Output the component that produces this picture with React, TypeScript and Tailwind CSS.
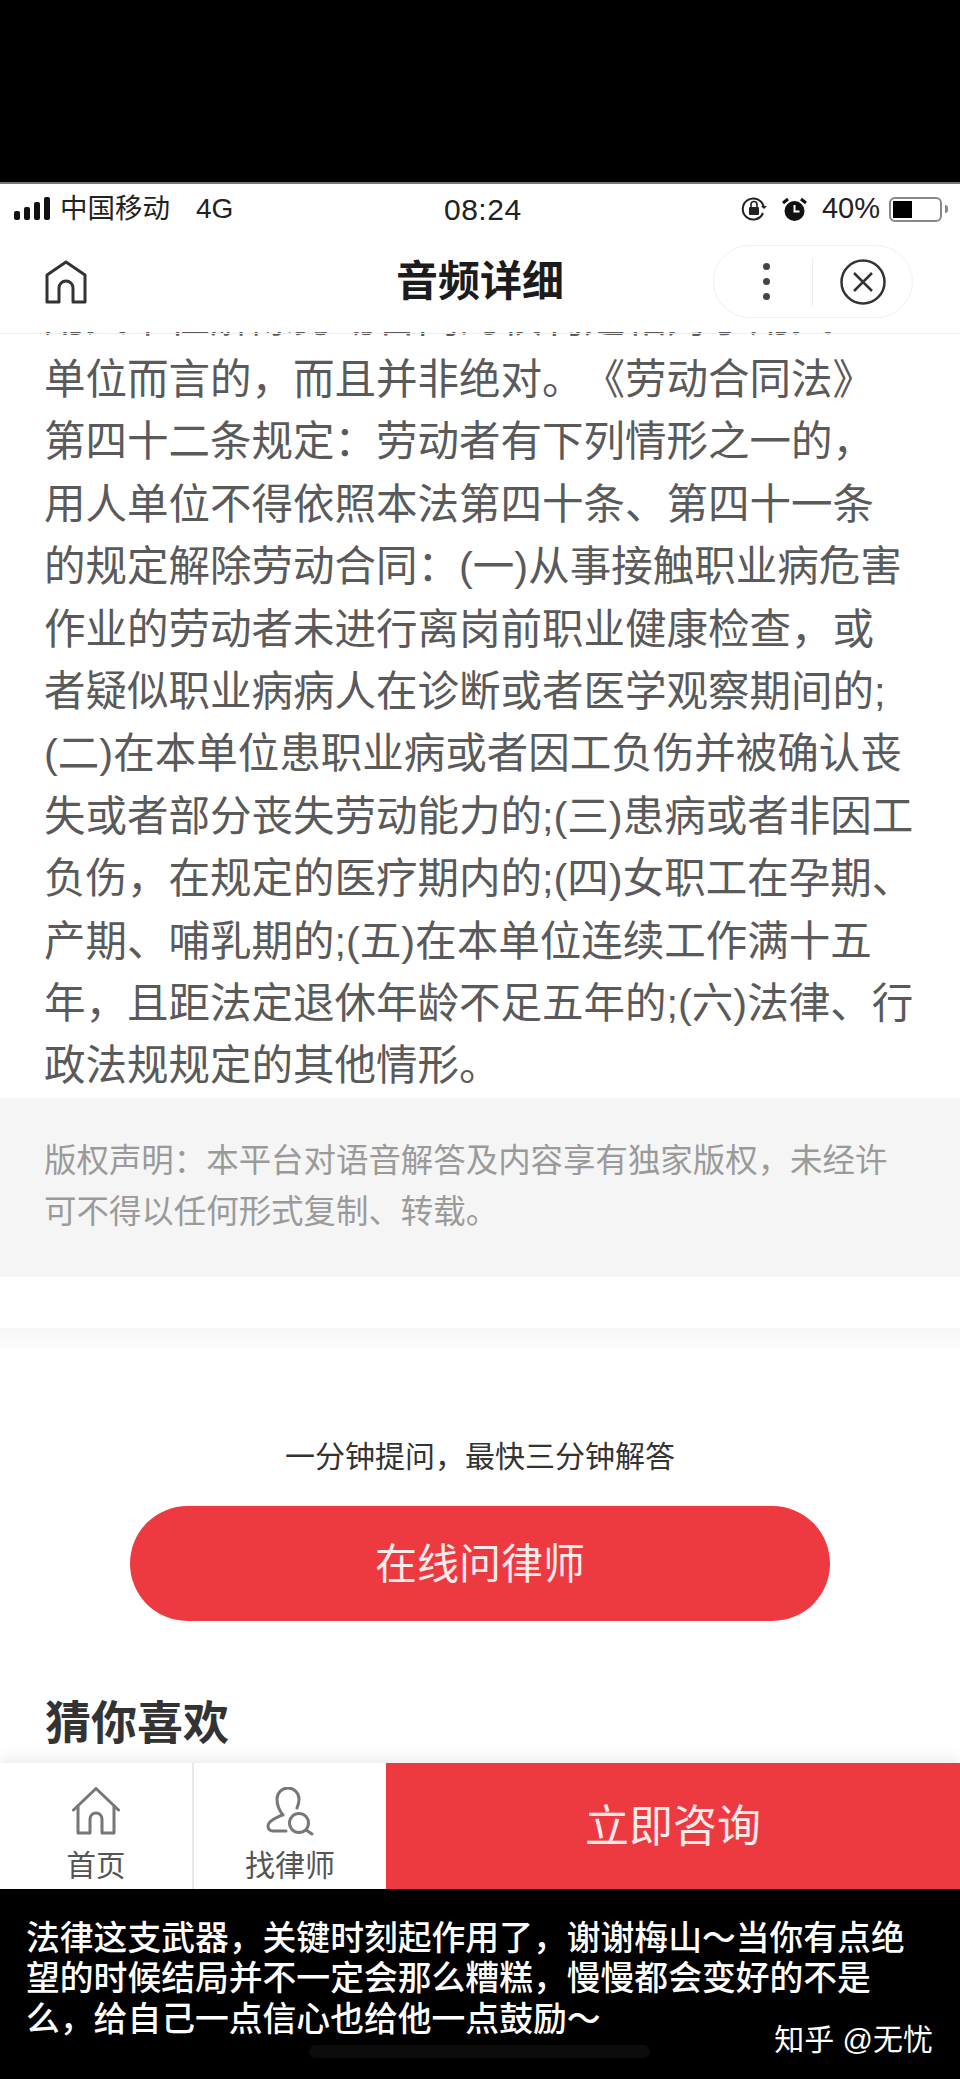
const cjk = "font-['Liberation_Sans','Noto_Sans_CJK_SC',sans-serif]";

const bodyLines = [
  '单位而言的，而且并非绝对。《劳动合同法》',
  '第四十二条规定：劳动者有下列情形之一的，',
  '用人单位不得依照本法第四十条、第四十一条',
  '的规定解除劳动合同：(一)从事接触职业病危害',
  '作业的劳动者未进行离岗前职业健康检查，或',
  '者疑似职业病病人在诊断或者医学观察期间的;',
  '(二)在本单位患职业病或者因工负伤并被确认丧',
  '失或者部分丧失劳动能力的;(三)患病或者非因工',
  '负伤，在规定的医疗期内的;(四)女职工在孕期、',
  '产期、哺乳期的;(五)在本单位连续工作满十五',
  '年，且距法定退休年龄不足五年的;(六)法律、行',
  '政法规规定的其他情形。',
];

function StatusBar() {
  return (
    <div className="relative flex h-[50px] items-center bg-white pl-[14px] pr-3 text-[#222]">
      <svg width="38" height="24" viewBox="0 0 38 24" fill="#111">
        <rect x="0" y="14" width="6" height="9" rx="2" />
        <rect x="10" y="10" width="6" height="13" rx="2" />
        <rect x="20" y="5" width="6" height="18" rx="2" />
        <rect x="30" y="0" width="6" height="23" rx="2" />
      </svg>
      <span className="ml-2 text-[27.5px]">中国移动</span>
      <span className="ml-[26px] text-[28px]">4G</span>
      <span className="absolute left-[444px] text-[30px] font-medium tracking-[0.5px]">08:24</span>
      <div className="ml-auto flex items-center">
        <svg width="26" height="26" viewBox="0 0 26 26" fill="none" stroke="#222" strokeWidth="2">
          <path d="M22 17a10.5 10.5 0 1 1 .6-6" />
          <path d="M20 10l3 3 3-3" fill="#222" stroke="none" />
          <rect x="8" y="11" width="10" height="8" rx="1" fill="#222" stroke="none" />
          <path d="M10 11V8.500a3 3 0 0 1 6 0V11" strokeWidth="1.600" />
        </svg>
        <svg className="ml-[15px]" width="25" height="25" viewBox="0 0 25 25">
          <circle cx="12.500" cy="14" r="10" fill="#111" />
          <path d="M12.500 8v6.500h5" stroke="#fff" strokeWidth="2" fill="none" />
          <path d="M1 6l5-4M24 6l-5-4" stroke="#111" strokeWidth="3" />
        </svg>
        <span className="ml-[15px] text-[29px]">40%</span>
        <div className="ml-[9px] flex h-[25px] w-[53px] items-center rounded-[6px] border-2 border-[#888] p-[2px]">
          <div className="h-full w-[19px] bg-black" />
        </div>
        <div className="ml-[3px] h-[8px] w-[3px] rounded-r-sm bg-[#888]" />
      </div>
    </div>
  );
}

function NavBar() {
  return (
    <div className="relative flex h-[98px] items-start bg-white pl-[45px]">
      <svg className="mt-[26px]" width="42" height="44" viewBox="0 0 42 44" fill="none" stroke="#333" strokeWidth="3" strokeLinejoin="round">
        <path d="M21 2L2 15v27h12V28a7 7 0 0 1 14 0v14h12V15z" />
      </svg>
      <h1 className="absolute left-[396px] top-[23px] text-[42px] font-bold leading-[50px] text-[#1c1c1c]">音频详细</h1>
      <div className="ml-auto mr-[47px] mt-[11px] flex h-[73px] w-[200px] items-center rounded-full border border-[#f1f1f1]">
        <div className="flex w-[98px] flex-col items-center gap-[8px] pl-[7px]">
          <span className="h-[7px] w-[7px] rounded-full bg-[#444]" />
          <span className="h-[7px] w-[7px] rounded-full bg-[#444]" />
          <span className="h-[7px] w-[7px] rounded-full bg-[#444]" />
        </div>
        <div className="h-[48px] w-px bg-[#eee]" />
        <svg className="ml-[27px]" width="46" height="46" viewBox="0 0 46 46" fill="none" stroke="#333" strokeWidth="2.500">
          <circle cx="23" cy="23" r="21.500" />
          <path d="M14 14l18 18M32 14L14 32" />
        </svg>
      </div>
    </div>
  );
}

function TabBar() {
  return (
    <div className="relative flex h-[126px] bg-white shadow-[0_-6px_14px_rgba(0,0,0,0.07)]">
      <div className="flex w-[194px] flex-col items-center border-r-2 border-[#e8e8e8] pt-[24px]">
        <svg width="48" height="48" viewBox="0 0 48 48" fill="none" stroke="#777" strokeWidth="3" strokeLinejoin="round" strokeLinecap="round">
          <path d="M1.500 23L24 1.500 46.500 23" />
          <path d="M6 19.500V46h12V32a6 6 0 0 1 12 0v14h12V19.500" />
        </svg>
        <span className="mt-[13px] text-[29.5px] leading-[36px] text-[#555]">首页</span>
      </div>
      <div className="flex w-[192px] flex-col items-center pt-[24px]">
        <svg width="48" height="50" viewBox="0 0 48 50" fill="none" stroke="#777" strokeWidth="3" strokeLinecap="round">
          <path d="M17 28C12 22 11 17 11 12a11 11 0 0 1 22 0c0 3-.5 6-2 9" />
          <path d="M16 28c-3 2-14 5-14 11 0 3 2 5 5 5h13" />
          <circle cx="33" cy="36" r="9.500" />
          <path d="M40 43l6 4" />
        </svg>
        <span className="mt-[11px] text-[30px] leading-[36px] text-[#555]">找律师</span>
      </div>
      <div className="flex flex-1 items-center justify-center bg-[#ec3a40] pt-[3px] text-[44px] text-[#fdeaea]">立即咨询</div>
    </div>
  );
}

export default function App() {
  return (
    <div className={`${cjk} flex h-[2079px] w-[960px] flex-col bg-black [text-spacing-trim:space-all]`}>
      <div className="h-[184px] border-b-2 border-[#777] bg-black" />
      <StatusBar />
      <NavBar />

      {/* line scrolled under the nav bar, only its lower edge shows */}
      <div className="relative h-[17px] overflow-hidden bg-white whitespace-nowrap pl-[44px] text-[41.5px] leading-[62.4px] text-[#5a5a5a]">
        <div className="-mt-[45px]">用人单位解除劳动合同的权利是相对于用人</div>
        <div className="absolute left-0 top-[1px] h-px w-full bg-[#eee]" />
      </div>

      <div className="whitespace-nowrap bg-white pl-[44px] text-[41.5px] leading-[62.4px] text-[#5a5a5a]">
        {bodyLines.map(line => (
          <div key={line}>{line}</div>
        ))}
      </div>

      <div className="h-[179px] bg-[#f5f5f5] pl-[44px] pt-[38px] text-[32.45px] leading-[51px] text-[#9a9a9a]">
        <div>版权声明：本平台对语音解答及内容享有独家版权，未经许</div>
        <div>可不得以任何形式复制、转载。</div>
      </div>
      <div className="h-[51px] bg-white" />
      <div className="h-[20px] bg-gradient-to-b from-[#f7f7f7] to-[#fcfcfc]" />

      <div className="flex h-[415px] flex-col bg-white">
        <p className="mt-[91px] text-center text-[30px] leading-[36px] text-[#333]">一分钟提问，最快三分钟解答</p>
        <button className="mx-auto mt-[31px] h-[115px] w-[700px] rounded-full bg-[#ec3a40] pt-[2px] text-[42px] text-[#fdeaea]">在线问律师</button>
        <h2 className="ml-[45px] mt-[74px] text-[46px] font-bold leading-[56px] text-[#333]">猜你喜欢</h2>
      </div>

      <TabBar />

      <div className="relative h-[190px] bg-black pl-[26px] pt-[29px] text-[33.8px] font-medium leading-[40.5px] text-white">
        <div>法律这支武器，关键时刻起作用了，谢谢梅山～当你有点绝</div>
        <div>望的时候结局并不一定会那么糟糕，慢慢都会变好的不是</div>
        <div>么，给自己一点信心也给他一点鼓励～</div>
        <div className="absolute bottom-[21px] left-[309px] h-[13px] w-[341px] rounded-full bg-[#0c0c0c]" />
        <div className="absolute bottom-[21px] right-[27px] text-[30px] font-normal leading-[36px]">知乎 @无忧</div>
      </div>
    </div>
  );
}
